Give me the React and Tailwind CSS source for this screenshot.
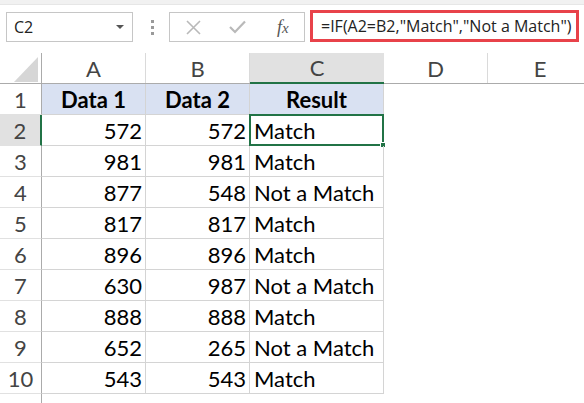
import React from "react";

const rows = [
  [572, 572, "Match"],
  [981, 981, "Match"],
  [877, 548, "Not a Match"],
  [817, 817, "Match"],
  [896, 896, "Match"],
  [630, 987, "Not a Match"],
  [888, 888, "Match"],
  [652, 265, "Not a Match"],
  [543, 543, "Match"],
];

const Toolbar = () => {
  return (
    <div className="h-[53px] bg-white">
      <div className="h-[5px] bg-[#f1f1f1] border-b border-[#e6e6e6]" />
      <div className="flex items-start pt-[5px]">
        {/* name box */}
        <div className="ml-[6px] mt-[2px] flex h-[30px] w-[127px] items-center justify-between border border-[#c6c6c6] pl-[7px] pr-[8px] text-[16px] text-[#222] font-['Open_Sans',sans-serif]">
          <span>C2</span>
          <span className="h-0 w-0 border-x-[4px] border-t-[4px] border-x-transparent border-t-[#555]" />
        </div>
        {/* dots */}
        <div className="ml-[18px] mt-[10px] flex flex-col gap-[3px]">
          <span className="h-[3px] w-[3px] bg-[#9a9a9a]" />
          <span className="h-[3px] w-[3px] bg-[#9a9a9a]" />
          <span className="h-[3px] w-[3px] bg-[#9a9a9a]" />
        </div>
        {/* cancel / enter / fx */}
        <div className="ml-[15px] mt-[2px] flex h-[30px] w-[136px] items-center border border-[#c6c6c6]">
          <svg className="ml-[16px]" width="15" height="15" viewBox="0 0 15 15">
            <path d="M1 1 L14 14 M14 1 L1 14" stroke="#b9b9b9" strokeWidth="1.6" fill="none" />
          </svg>
          <svg className="ml-[28px]" width="17" height="14" viewBox="0 0 17 14">
            <path d="M1 7 L6 12 L16 1.5" stroke="#b9b9b9" strokeWidth="2.2" fill="none" />
          </svg>
          <span className="ml-[31px] text-[18px] italic text-[#555] font-['Liberation_Serif',serif] leading-none">
            f<span className="text-[15px]">x</span>
          </span>
        </div>
        {/* formula */}
        <div className="ml-[5px] flex h-[32px] w-[269px] items-center overflow-hidden border-[3px] border-[#e8424a] pl-[8px] text-[16px] text-[#222] font-['Open_Sans',sans-serif] whitespace-nowrap">
          =IF(A2=B2,"Match","Not a Match")
        </div>
      </div>
    </div>
  );
};

const App = () => {
  return (
    <div className="h-[403px] w-[584px] overflow-hidden bg-white font-['Lato',sans-serif]">
      <Toolbar />

      {/* column headers */}
      <div className="flex h-[31px] border-b border-[#ababab] text-[22px] text-[#444]">
        <div className="relative w-[42px] shrink-0 border-r border-[#ababab]">
          <svg className="absolute bottom-[1px] right-[3px]" width="24" height="25" viewBox="0 0 24 25">
            <path d="M24 0 L24 25 L0 25 Z" fill="#d6d6d6" />
          </svg>
        </div>
        <div className="flex w-[104px] shrink-0 items-center justify-center border-r border-[#dadada]">A</div>
        <div className="flex w-[104px] shrink-0 items-center justify-center border-r border-[#dadada]">B</div>
        <div className="-mb-px flex w-[134px] shrink-0 items-center justify-center border-b-2 border-[#217346] bg-[#e1e1e1]">C</div>
        <div className="flex w-[104px] shrink-0 items-center justify-center border-r border-[#dadada]">D</div>
        <div className="flex w-[104px] shrink-0 items-center justify-center">E</div>
      </div>

      {/* header data row */}
      <div className="flex h-[31px] text-[22px]">
        <div className="flex w-[42px] items-center justify-center border-r border-b border-r-[#ababab] border-b-[#e1e1e1] text-[#444]">1</div>
        <div className="flex w-[104px] items-center justify-center border-r border-b border-[#d4d4d4] bg-[#d9e1f2] font-bold text-black">Data 1</div>
        <div className="flex w-[104px] items-center justify-center border-r border-b border-[#d4d4d4] bg-[#d9e1f2] font-bold text-black">Data 2</div>
        <div className="flex w-[134px] items-center justify-center border-r border-b border-[#d4d4d4] bg-[#d9e1f2] font-bold text-black">Result</div>
      </div>

      {rows.map((r, i) => {
        const active = i === 0;
        return (
          <div key={i} className="flex h-[31px] text-[22px] text-black">
            <div
              className={
                active
                  ? "flex w-[42px] items-center justify-center border-r-2 border-b border-r-[#217346] border-b-[#e1e1e1] bg-[#e1e1e1] text-[#444]"
                  : "flex w-[42px] items-center justify-center border-r border-b border-r-[#ababab] border-b-[#e1e1e1] text-[#444]"
              }
            >
              {i + 2}
            </div>
            <div className="flex w-[104px] items-center justify-end border-r border-b border-[#d4d4d4] pr-[3px]">{r[0]}</div>
            <div className="flex w-[104px] items-center justify-end border-r border-b border-[#d4d4d4] pr-[3px]">{r[1]}</div>
            <div className="relative flex w-[134px] items-center border-r border-b border-[#d4d4d4] pl-[4px]">
              {r[2]}
              {active && (
                <>
                  <div className="absolute -left-px -top-px h-[32px] w-[135px] border-2 border-[#217346]" />
                  <div className="absolute -bottom-[3px] -right-[3px] h-[6px] w-[6px] border border-white bg-[#217346]" />
                </>
              )}
            </div>
          </div>
        );
      })}

      <div className="flex h-[20px] text-[22px]">
        <div className="flex w-[42px] justify-center border-r border-[#ababab] pt-[2px] text-[#444]">11</div>
      </div>
    </div>
  );
};

export default App;
